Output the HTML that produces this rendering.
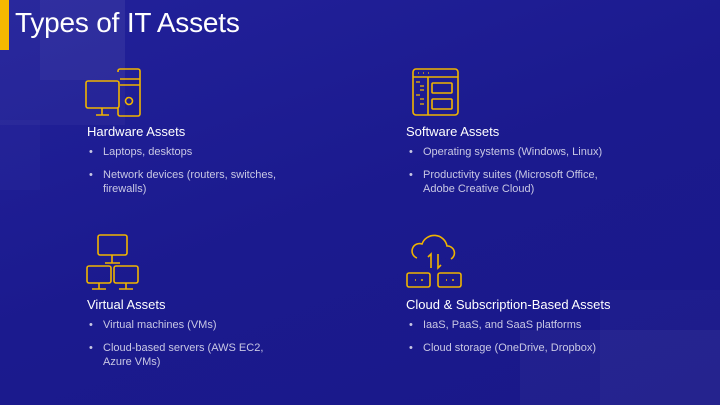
<!DOCTYPE html>
<html><head><style>
*{margin:0;padding:0}
body{width:720px;height:405px;overflow:hidden;position:relative;font-family:"Liberation Sans",sans-serif;background:linear-gradient(160deg,#22219a 0%,#1b1a8e 50%,#1a1889 100%)}
.sq{position:absolute;background:rgba(255,255,255,0.035)}
.bar{position:absolute;left:0;top:0;width:9px;height:50px;background:#f5b800}
h1{position:absolute;left:15px;top:7px;font-size:28px;font-weight:normal;color:#fff;letter-spacing:-0.2px}
.h{position:absolute;font-size:13px;color:#fff}
.b{position:absolute;font-size:11px;color:#c9c8e4;line-height:14px}
.b:before{content:"•";position:absolute;left:-14px}
svg{position:absolute;fill:none;stroke:#f0b400;stroke-width:1.6}
</style></head><body>
<div class="sq" style="left:0;top:0;width:125px;height:125px"></div>
<div class="sq" style="left:40px;top:0;width:85px;height:80px"></div>
<div class="sq" style="left:0;top:120px;width:40px;height:70px;background:rgba(255,255,255,0.02)"></div>
<div class="sq" style="left:520px;top:330px;width:200px;height:75px;background:rgba(255,255,255,0.03)"></div>
<div class="sq" style="left:600px;top:290px;width:120px;height:115px;background:rgba(255,255,255,0.02)"></div>
<div class="bar"></div>
<h1>Types of IT Assets</h1>

<svg style="left:84px;top:68px" width="60" height="50" viewBox="0 0 60 50">
<rect x="2" y="13" width="33" height="27" rx="2"/><path d="M18 40v7M12 47h13"/>
<path d="M34 4v-1a2 2 0 0 1 2-2h18a2 2 0 0 1 2 2v43a2 2 0 0 1-2 2h-18a2 2 0 0 1-2-2v-6M36 11h20M36 17h20"/><circle cx="45" cy="33" r="3.5"/>
</svg>
<div class="h" style="left:87px;top:124px">Hardware Assets</div>
<div class="b" style="left:103px;top:145px">Laptops, desktops</div>
<div class="b" style="left:103px;top:168px">Network devices (routers, switches,<br>firewalls)</div>

<svg style="left:411px;top:67px" width="50" height="50" viewBox="0 0 50 50">
<rect x="2" y="2" width="45" height="46" rx="3"/><path d="M2 10h45M17 10v38"/>
<rect x="21" y="16" width="20" height="10" rx="1"/><rect x="21" y="32" width="20" height="10" rx="1"/>
<path d="M7 6h1M12 6h1M17 6h1M5 15h4M9 19h4M9 23h4M5 28h4M9 32h4M9 37h4" stroke-width="1.3"/>
</svg>
<div class="h" style="left:406px;top:124px">Software Assets</div>
<div class="b" style="left:423px;top:145px">Operating systems (Windows, Linux)</div>
<div class="b" style="left:423px;top:168px">Productivity suites (Microsoft Office,<br>Adobe Creative Cloud)</div>

<svg style="left:85px;top:233px" width="58" height="60" viewBox="0 0 58 60">
<rect x="13" y="2" width="29" height="20" rx="2"/><path d="M27 22v8M20 30h15"/>
<rect x="2" y="33" width="24" height="17" rx="2"/><path d="M14 50v6M7 56h14"/>
<rect x="29" y="33" width="24" height="17" rx="2"/><path d="M41 50v6M34 56h14"/>
</svg>
<div class="h" style="left:87px;top:297px">Virtual Assets</div>
<div class="b" style="left:103px;top:318px">Virtual machines (VMs)</div>
<div class="b" style="left:103px;top:341px">Cloud-based servers (AWS EC2,<br>Azure VMs)</div>

<svg style="left:405px;top:232px" width="60" height="60" viewBox="0 0 60 60">
<path d="M12 26a7 7 0 0 1 5-14a13 13 0 0 1 25 2a7 7 0 0 1 4 13"/>
<path d="M26 36v-14l-3 3M33 22v14l3-3"/>
<rect x="2" y="41" width="23" height="14" rx="2"/><rect x="33" y="41" width="23" height="14" rx="2"/>
<path d="M10 48h1M16 48h2M41 48h1M47 48h2"/>
</svg>
<div class="h" style="left:406px;top:297px">Cloud &amp; Subscription-Based Assets</div>
<div class="b" style="left:423px;top:318px">IaaS, PaaS, and SaaS platforms</div>
<div class="b" style="left:423px;top:341px">Cloud storage (OneDrive, Dropbox)</div>
</body></html>
